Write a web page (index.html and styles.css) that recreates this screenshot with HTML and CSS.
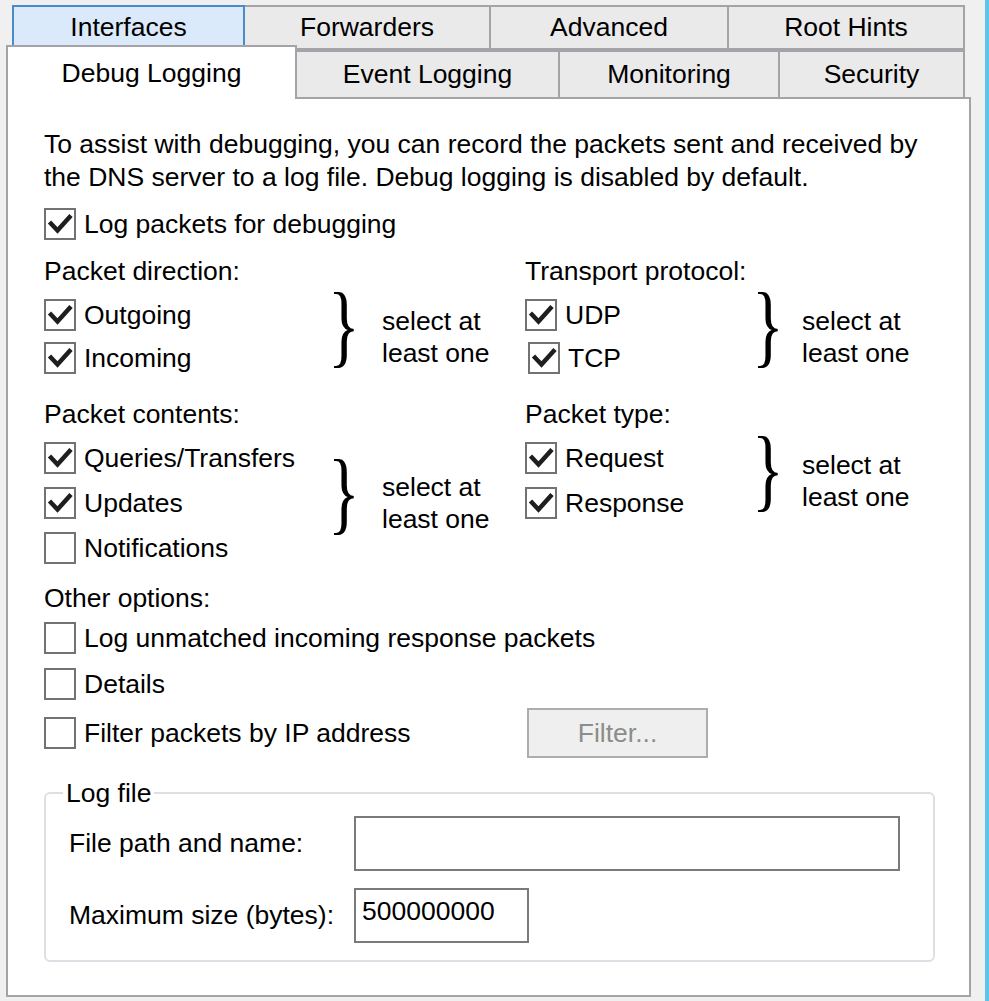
FILE: index.html
```html
<!DOCTYPE html>
<html lang="en">
  <head>
    <meta charset="UTF-8" />
    <meta name="viewport" content="width=device-width, initial-scale=1.0" />
    <title>DNS 服务器属性 - Debug Logging</title>
    <link rel="stylesheet" href="styles.css">
  </head>
  <body>
    <div class="dialog">
      <!-- 后排标签 -->
      <ul class="tabs tabs-back">
        <li class="tab tab-interfaces hover">Interfaces</li>
        <li class="tab tab-forwarders">Forwarders</li>
        <li class="tab tab-advanced">Advanced</li>
        <li class="tab tab-roothints">Root Hints</li>
      </ul>

      <!-- 前排标签 -->
      <ul class="tabs tabs-front">
        <li class="tab tab-debug active">Debug Logging</li>
        <li class="tab tab-event">Event Logging</li>
        <li class="tab tab-monitoring">Monitoring</li>
        <li class="tab tab-security">Security</li>
      </ul>

      <!-- 内容面板 -->
      <div class="panel">
        <p class="intro">To assist with debugging, you can record the packets sent and received by<br>the DNS server to a log file. Debug logging is disabled by default.</p>

        <label class="check main-toggle">
          <span class="box checked"><svg viewBox="0 0 28 28"><path d="M3.5 12 L11.5 20.5 L25 5.5" /></svg></span>
          Log packets for debugging
        </label>

        <div class="options">
          <!-- 方向 -->
          <div class="group group-left">
            <div class="caption">Packet direction:</div>
            <div class="choice">
              <div class="checks">
                <label class="check"><span class="box checked"><svg viewBox="0 0 28 28"><path d="M3.5 12 L11.5 20.5 L25 5.5" /></svg></span>Outgoing</label>
                <label class="check"><span class="box checked"><svg viewBox="0 0 28 28"><path d="M3.5 12 L11.5 20.5 L25 5.5" /></svg></span>Incoming</label>
              </div>
              <span class="brace">}</span>
              <div class="note">select at<br>least one</div>
            </div>
          </div>

          <!-- 协议 -->
          <div class="group group-right">
            <div class="caption">Transport protocol:</div>
            <div class="choice">
              <div class="checks">
                <label class="check"><span class="box checked"><svg viewBox="0 0 28 28"><path d="M3.5 12 L11.5 20.5 L25 5.5" /></svg></span>UDP</label>
                <label class="check shifted"><span class="box checked"><svg viewBox="0 0 28 28"><path d="M3.5 12 L11.5 20.5 L25 5.5" /></svg></span>TCP</label>
              </div>
              <span class="brace">}</span>
              <div class="note">select at<br>least one</div>
            </div>
          </div>

          <!-- 内容 -->
          <div class="group group-left">
            <div class="caption">Packet contents:</div>
            <div class="choice">
              <div class="checks">
                <label class="check"><span class="box checked"><svg viewBox="0 0 28 28"><path d="M3.5 12 L11.5 20.5 L25 5.5" /></svg></span>Queries/Transfers</label>
                <label class="check"><span class="box checked"><svg viewBox="0 0 28 28"><path d="M3.5 12 L11.5 20.5 L25 5.5" /></svg></span>Updates</label>
                <label class="check"><span class="box"></span>Notifications</label>
              </div>
              <span class="brace">}</span>
              <div class="note">select at<br>least one</div>
            </div>
          </div>

          <!-- 类型 -->
          <div class="group group-right">
            <div class="caption">Packet type:</div>
            <div class="choice">
              <div class="checks">
                <label class="check"><span class="box checked"><svg viewBox="0 0 28 28"><path d="M3.5 12 L11.5 20.5 L25 5.5" /></svg></span>Request</label>
                <label class="check"><span class="box checked"><svg viewBox="0 0 28 28"><path d="M3.5 12 L11.5 20.5 L25 5.5" /></svg></span>Response</label>
              </div>
              <span class="brace">}</span>
              <div class="note">select at<br>least one</div>
            </div>
          </div>
        </div>

        <!-- 其他选项 -->
        <div class="other">
          <div class="caption">Other options:</div>
          <label class="check"><span class="box"></span>Log unmatched incoming response packets</label>
          <label class="check"><span class="box"></span>Details</label>
          <div class="filter-row">
            <label class="check"><span class="box"></span>Filter packets by IP address</label>
            <button class="btn" disabled>Filter...</button>
          </div>
        </div>

        <!-- 日志文件 -->
        <fieldset class="log-file">
          <legend>Log file</legend>
          <div class="log-row">
            <span class="field-label">File path and name:</span>
            <input class="input input-path" type="text" value="" />
            <span class="field-label">Maximum size (bytes):</span>
            <input class="input input-size" type="text" value="500000000" />
          </div>
        </fieldset>
      </div>
    </div>
    <div class="edge"></div>
  </body>
</html>
```

FILE: styles.css
```css
* {
  padding: 0;
  margin: 0;
  box-sizing: border-box;
}

body {
  display: flex;
  min-height: 100vh;

  font-family: "Liberation Sans", Arial, sans-serif;
  font-size: 26.5px;
  color: #000;

  background-color: #f0f0f0;
}

.dialog {
  flex: 1;
  padding: 5px 14px 0 6px;
}

.edge {
  width: 4px;
  background-color: #5cc5ea;
}

/* 标签页 */
.tabs {
  display: flex;
  list-style: none;
}

.tabs-back {
  margin-left: 6px;
}

.tabs-front {
  position: relative;
  z-index: 2;
  align-items: flex-end;
  margin-top: -5px;
}

.tab {
  display: flex;
  align-items: center;
  justify-content: center;
  height: 45px;
  margin-left: -2px;
  border: 2px solid #a3a3a8;

  background-color: #eaeaea;
}

.tab:first-child {
  margin-left: 0;
}

.tab.hover {
  position: relative;
  z-index: 1;
  border-color: #4a8bcc;
  background-color: #dbeafa;
}

.tabs-front .tab {
  height: 47px;
  border-bottom: none;
}

.tabs-front .tab.active {
  height: 54px;
  margin-bottom: -2px;
  background-color: #fff;
}

.tab-interfaces { width: 233px; }
.tab-forwarders { width: 248px; }
.tab-advanced { width: 240px; }
.tab-roothints { width: 238px; }

.tab-debug { width: 291px; }
.tab-event { width: 265px; }
.tab-monitoring { width: 222px; }
.tab-security { width: 187px; }

/* 面板 */
.panel {
  padding: 29px 30px 33px 36px;
  border: 2px solid #a3a3a8;
  background-color: #fff;
}

.intro {
  line-height: 33px;
}

.check {
  display: flex;
  align-items: center;
  gap: 8px;
  height: 32px;
  line-height: 32px;
  white-space: nowrap;
}

.box {
  display: flex;
  align-items: center;
  justify-content: center;
  flex: none;
  width: 32px;
  height: 32px;
  border: 2px solid #727272;

  background-color: #fff;
}

.box svg {
  width: 28px;
  height: 28px;
}

.box svg path {
  fill: none;
  stroke: #1e1e1e;
  stroke-width: 4.5;
}

.main-toggle {
  margin-top: 14px;
}

.caption {
  height: 32px;
  line-height: 32px;
}

.options {
  display: grid;
  grid-template-columns: 481px 1fr;
  row-gap: 24px;
  margin-top: 15px;
}

.choice {
  display: flex;
  align-items: center;
  margin-top: 12px;
}

.checks {
  display: flex;
  flex-direction: column;
  gap: 11px;
}

.group-left .checks {
  width: 284px;
}

.group-right .checks {
  width: 227px;
}

.options .group:nth-child(n+3) .checks {
  gap: 13px;
}

.shifted {
  margin-left: 3px;
}

.brace {
  display: block;
  flex: none;
  height: 75px;

  font-family: "Liberation Serif", "Times New Roman", serif;
  font-size: 92px;
  line-height: 75px;

  transform: translateY(-11px) scaleX(0.72);
  transform-origin: left center;
}

.group-left .brace {
  width: 54px;
}

.group-right .brace {
  width: 50px;
}

.note {
  line-height: 32px;
}

/* 其他选项 */
.other {
  margin-top: 18px;
}

.other .caption {
  margin-bottom: 8px;
}

.other .check + .check {
  margin-top: 14px;
}

.filter-row {
  display: grid;
  grid-template-columns: 481px 1fr;
  align-items: center;
  margin-top: 8px;
}

.btn {
  width: 181px;
  height: 50px;
  margin-left: 2px;
  border: 2px solid #adadad;

  font-family: inherit;
  font-size: 26.5px;
  color: #8c8c8c;

  background-color: #efefef;
}

/* 日志文件 */
.log-file {
  width: 891px;
  margin-top: 19px;
  padding: 7px 20px 17px 23px;
  border: 2px solid #dce0e5;
  border-radius: 6px;
}

.log-file legend {
  margin-left: -6px;
  padding: 0 3px;
  line-height: 32px;
}

.log-row {
  display: grid;
  grid-template-columns: 285px auto;
  align-items: center;
  row-gap: 17px;
}

.input {
  height: 55px;
  padding: 0 6px 8px;
  border: 2px solid #7a7a7a;

  font-family: inherit;
  font-size: 26.5px;
  color: #000;

  background-color: #fff;
  outline: none;
}

.input-path {
  width: 546px;
}

.input-size {
  width: 175px;
}
```
